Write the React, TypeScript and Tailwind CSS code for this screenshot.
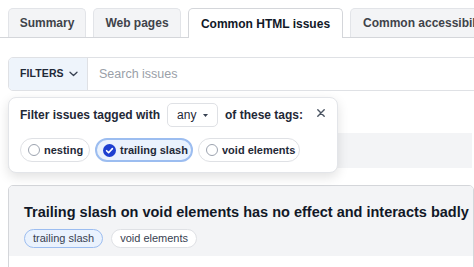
import React from "react";

function Radio() {
  return <span className="block w-[12px] h-[12px] rounded-full border border-[#9ca3af] bg-white shrink-0" />;
}

function Checked() {
  return (
    <svg width="13" height="13" viewBox="0 0 13 13" className="shrink-0">
      <circle cx="6.5" cy="6.5" r="6.5" fill="#1d3fd0" />
      <path d="M3.6 6.7l2 2 3.8-4.1" fill="none" stroke="#fff" strokeWidth="1.6" strokeLinecap="round" strokeLinejoin="round" />
    </svg>
  );
}

export default function App() {
  return (
    <div className="relative w-[474px] h-[267px] overflow-hidden bg-white font-['Liberation_Sans',Arial,sans-serif] text-[#111827]">
      {/* Tabs */}
      <div className="flex items-end gap-[7px] pl-2 pt-2 border-b border-[#d4d6da] w-[600px]">
        <div className="h-[29px] w-[78px] flex items-center justify-center bg-[#f3f4f6] border border-b-0 border-[#e2e4e8] rounded-t-[5px] text-[12px] font-bold text-[#3f434a] whitespace-nowrap shrink-0">
          Summary
        </div>
        <div className="h-[29px] w-[88px] flex items-center justify-center bg-[#f3f4f6] border border-b-0 border-[#e2e4e8] rounded-t-[5px] text-[12px] font-bold text-[#3f434a] whitespace-nowrap shrink-0">
          Web pages
        </div>
        <div className="h-[30px] -mb-px w-[155px] flex items-center justify-center bg-white border border-b-0 border-[#d4d6da] rounded-t-[5px] text-[12px] font-bold text-[#111827] whitespace-nowrap shrink-0">
          Common HTML issues
        </div>
        <div className="h-[29px] pl-[12px] pr-3 flex items-center bg-[#f3f4f6] border border-b-0 border-[#e2e4e8] rounded-t-[5px] text-[12px] font-bold text-[#3f434a] whitespace-nowrap shrink-0">
          Common accessibility issues
        </div>
      </div>

      {/* Filter bar */}
      <div className="ml-2 mt-[19px] w-[480px] h-[34px] flex border border-[#dfe1e5] rounded-[5px] overflow-hidden">
        <div className="w-[79px] shrink-0 bg-[#eef4fb] border-r border-[#dfe1e5] flex items-center pl-[11px] gap-[5px]">
          <span className="text-[10.5px] font-bold text-[#1f2937] tracking-[0.1px]">FILTERS</span>
          <svg width="9" height="6" viewBox="0 0 9 6">
            <path d="M1 1.2l3.5 3.3L8 1.2" fill="none" stroke="#374151" strokeWidth="1.3" strokeLinecap="round" strokeLinejoin="round" />
          </svg>
        </div>
        <div className="flex items-center pl-[11px] text-[12.5px] text-[#9aa0a8]">Search issues</div>
      </div>

      {/* Background content behind popup */}
      <div className="ml-2 mt-[42px] w-[464px] h-[35px] bg-[#f3f4f6]" />

      {/* Issue card */}
      <div className="ml-2 mt-[17px] w-[466px] border border-[#d4d6da] rounded-[5px] overflow-hidden">
        <div className="bg-[#f3f4f6] pt-[16px] pb-[8px] pl-[15px]">
          <div className="text-[14.5px] leading-[20px] font-bold text-[#111827] whitespace-nowrap">
            Trailing slash on void elements has no effect and interacts badly
          </div>
          <div className="mt-[7px] flex gap-[8px]">
            <span className="h-[19px] px-[8px] flex items-center rounded-full border-[1.5px] border-[#9cbdf0] bg-[#eaf2fd] text-[11px] text-[#374151] whitespace-nowrap">
              trailing slash
            </span>
            <span className="h-[19px] px-[8px] flex items-center rounded-full border border-[#dfe1e5] bg-white text-[11px] text-[#374151] whitespace-nowrap">
              void elements
            </span>
          </div>
        </div>
        <div className="h-[20px] bg-white" />
      </div>

      {/* Popover */}
      <div className="absolute left-2 top-[97px] w-[330px] h-[76px] bg-white border border-[#e3e5e9] rounded-[8px] shadow-[0_4px_12px_rgba(0,0,0,0.12)] pl-[11px] pt-[5px]">
        <div className="flex items-center h-[24px] text-[12px] font-bold text-[#1f2937]">
          <span className="whitespace-nowrap">Filter issues tagged with</span>
          <span className="ml-[7px] h-[24px] w-[51px] flex items-center pl-[9px] gap-[7px] border border-[#dfe1e5] rounded-[5px] font-normal text-[#1f2937]">
            any
            <svg width="5" height="3" viewBox="0 0 5 3">
              <path d="M0 0h5L2.5 3z" fill="#374151" />
            </svg>
          </span>
          <span className="ml-[7px] whitespace-nowrap">of these tags:</span>
        </div>
        <svg className="absolute left-[308px] top-[11px]" width="8" height="8" viewBox="0 0 8 8">
          <path d="M0.8 0.8l6.4 6.4M7.2 0.8l-6.4 6.4" stroke="#4b5563" strokeWidth="1.4" strokeLinecap="round" />
        </svg>
        <div className="mt-[11px] flex gap-[5px]">
          <span className="h-[24px] w-[70px] pl-[7px] flex items-center gap-[4px] rounded-full border border-[#dfe1e5] bg-white text-[11px] font-bold text-[#1f2937] whitespace-nowrap">
            <Radio />
            nesting
          </span>
          <span className="h-[24px] w-[98px] pl-[6px] flex items-center gap-[4px] rounded-full border-2 border-[#9cbdf0] bg-[#eaf2fd] text-[11px] font-bold text-[#1f2937] whitespace-nowrap">
            <Checked />
            trailing slash
          </span>
          <span className="h-[24px] w-[102px] pl-[7px] flex items-center gap-[4px] rounded-full border border-[#dfe1e5] bg-white text-[11px] font-bold text-[#1f2937] whitespace-nowrap">
            <Radio />
            void elements
          </span>
        </div>
      </div>
    </div>
  );
}
